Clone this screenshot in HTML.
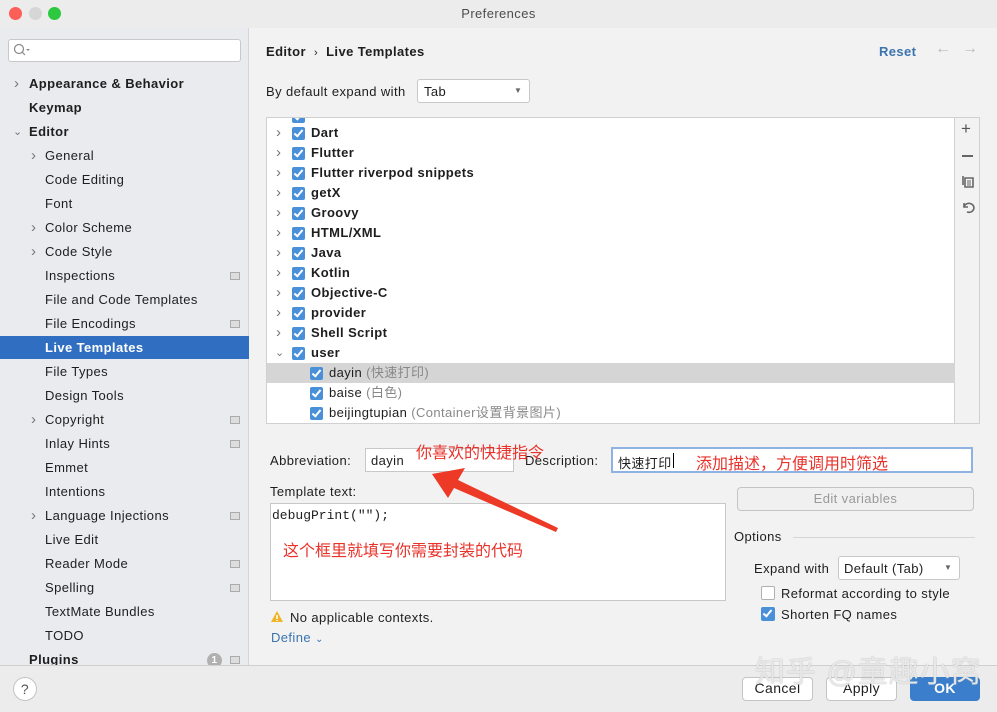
<!DOCTYPE html>
<html><head><meta charset="utf-8"><style>
*{margin:0;padding:0;box-sizing:border-box}
body{width:997px;height:712px;overflow:hidden;background:#f2f2f2;font-family:"Liberation Sans","Noto Sans CJK SC",sans-serif;font-size:13px;color:#1e1e1e;position:relative;letter-spacing:0.4px}
.a{position:absolute;white-space:nowrap}
.side{position:absolute;left:0;top:28px;width:249px;height:637px;background:#e9ebee;border-right:1px solid #d6d6d6}
.si{position:absolute;left:0;width:249px;height:24px;line-height:24px}
.b{font-weight:bold}
.chev{position:absolute;font-size:15px;color:#777;font-weight:normal}
.mi{position:absolute;left:230px;top:8px;width:10px;height:8px;border:1px solid #aaa;background:#ddd}
.cb{position:absolute;width:13px;height:13px;background:#4a90d9;border-radius:2px}
.cb:after{content:"";position:absolute;left:4px;top:1px;width:3px;height:7px;border:solid #fff;border-width:0 2px 2px 0;transform:rotate(40deg)}
.row{position:absolute;left:267px;width:688px;height:20px;line-height:20px}
.fld{position:absolute;background:#fff;border:1px solid #c8c8c8}
.btn{position:absolute;background:#fff;border:1px solid #c4c4c4;border-radius:4px;text-align:center;line-height:21px;font-size:14px}
.red{color:#e8322a;font-size:16px;position:absolute;white-space:nowrap;letter-spacing:0}
</style></head><body>
<div class="a" style="left:0;top:0;width:997px;height:28px;background:#ececec"></div>
<div class="a" style="left:9px;top:7px;width:13px;height:13px;border-radius:50%;background:#fc5f57"></div>
<div class="a" style="left:29px;top:7px;width:13px;height:13px;border-radius:50%;background:#d6d6d6"></div>
<div class="a" style="left:48px;top:7px;width:13px;height:13px;border-radius:50%;background:#2bc840"></div>
<div class="a" style="left:0;width:997px;top:6px;text-align:center;color:#4d4d4d">Preferences</div>

<div class="side">
<div class="a" style="left:8px;top:11px;width:233px;height:23px;background:#fff;border:1px solid #c8c8c8;border-radius:3px"></div>
<svg class="a" style="left:13px;top:15px" width="20" height="14"><circle cx="6" cy="6" r="4.5" fill="none" stroke="#888" stroke-width="1.2"/><line x1="9" y1="9" x2="12" y2="12" stroke="#888" stroke-width="1.2"/><path d="M13 6h4l-2 2z" fill="#888"/></svg>
</div>
<div style="position:absolute;left:0;top:72px;width:249px">
<div class="si b" style="top:0"><span class="chev" style="left:14px">›</span><span class="a" style="left:29px">Appearance &amp; Behavior</span></div>
<div class="si b" style="top:24px"><span class="a" style="left:29px">Keymap</span></div>
<div class="si b" style="top:48px"><span class="chev" style="left:13px;font-size:11px">&#8964;</span><span class="a" style="left:29px">Editor</span></div>
<div class="si" style="top:72px"><span class="chev" style="left:31px">›</span><span class="a" style="left:45px">General</span></div>
<div class="si" style="top:96px"><span class="a" style="left:45px">Code Editing</span></div>
<div class="si" style="top:120px"><span class="a" style="left:45px">Font</span></div>
<div class="si" style="top:144px"><span class="chev" style="left:31px">›</span><span class="a" style="left:45px">Color Scheme</span></div>
<div class="si" style="top:168px"><span class="chev" style="left:31px">›</span><span class="a" style="left:45px">Code Style</span></div>
<div class="si" style="top:192px"><span class="a" style="left:45px">Inspections</span><i class="mi"></i></div>
<div class="si" style="top:216px"><span class="a" style="left:45px">File and Code Templates</span></div>
<div class="si" style="top:240px"><span class="a" style="left:45px">File Encodings</span><i class="mi"></i></div>
<div class="si b" style="top:264px;height:23px;background:#2f6ec0;color:#fff;line-height:23px"><span class="a" style="left:45px">Live Templates</span></div>
<div class="si" style="top:288px"><span class="a" style="left:45px">File Types</span></div>
<div class="si" style="top:312px"><span class="a" style="left:45px">Design Tools</span></div>
<div class="si" style="top:336px"><span class="chev" style="left:31px">›</span><span class="a" style="left:45px">Copyright</span><i class="mi"></i></div>
<div class="si" style="top:360px"><span class="a" style="left:45px">Inlay Hints</span><i class="mi"></i></div>
<div class="si" style="top:384px"><span class="a" style="left:45px">Emmet</span></div>
<div class="si" style="top:408px"><span class="a" style="left:45px">Intentions</span></div>
<div class="si" style="top:432px"><span class="chev" style="left:31px">›</span><span class="a" style="left:45px">Language Injections</span><i class="mi"></i></div>
<div class="si" style="top:456px"><span class="a" style="left:45px">Live Edit</span></div>
<div class="si" style="top:480px"><span class="a" style="left:45px">Reader Mode</span><i class="mi"></i></div>
<div class="si" style="top:504px"><span class="a" style="left:45px">Spelling</span><i class="mi"></i></div>
<div class="si" style="top:528px"><span class="a" style="left:45px">TextMate Bundles</span></div>
<div class="si" style="top:552px"><span class="a" style="left:45px">TODO</span></div>
<div class="si b" style="top:576px;height:17px;overflow:hidden"><span class="a" style="left:29px">Plugins</span><span class="a" style="left:207px;top:5px;width:15px;height:15px;border-radius:50%;background:#b0b0b0;color:#fff;font-size:10px;line-height:15px;text-align:center">1</span><i class="mi"></i></div>
</div>

<div class="a b" style="left:266px;top:44px">Editor &nbsp;<span style="font-weight:normal;font-size:11px">›</span>&nbsp; Live Templates</div>
<div class="a b" style="left:879px;top:44px;color:#3a75b0">Reset</div>
<div class="a" style="left:935px;top:40px;color:#bbb;font-size:16px">←</div>
<div class="a" style="left:962px;top:40px;color:#bbb;font-size:16px">→</div>
<div class="a" style="left:266px;top:84px">By default expand with</div>
<div class="fld" style="left:417px;top:79px;width:113px;height:24px;border-radius:3px"><span class="a" style="left:6px;top:4px">Tab</span><span class="a" style="left:96px;top:6px;font-size:8px;color:#666">▼</span></div>

<div class="fld" style="left:266px;top:117px;width:689px;height:307px;overflow:hidden;border-color:#d0d0d0">
<div class="cb" style="left:25px;top:-8px"></div>
</div>
<div class="a" style="left:955px;top:117px;width:25px;height:307px;border:1px solid #d0d0d0;border-left:none;background:#f2f2f2"></div>
<div class="a" style="left:961px;top:119px;font-size:17px;color:#555">+</div>
<div class="a" style="left:962px;top:155px;width:11px;height:2px;background:#666"></div>
<svg class="a" style="left:961px;top:174px" width="14" height="14"><path d="M2 2v9M4 4h8v9h-8z" fill="none" stroke="#666" stroke-width="1.6"/><path d="M6 7h4M6 9h4M6 11h4" stroke="#666"/></svg>
<svg class="a" style="left:961px;top:200px" width="14" height="14"><path d="M3 3v4h4" fill="none" stroke="#666" stroke-width="1.6"/><path d="M3 7a5 4.5 0 1 1 3 5" fill="none" stroke="#666" stroke-width="1.6"/></svg>

<div style="position:absolute;left:0;top:123px">
<div class="row" style="top:0"><span class="chev" style="left:9px">›</span><i class="cb" style="left:25px;top:4px"></i><span class="a b" style="left:44px">Dart</span></div>
<div class="row" style="top:20px"><span class="chev" style="left:9px">›</span><i class="cb" style="left:25px;top:4px"></i><span class="a b" style="left:44px">Flutter</span></div>
<div class="row" style="top:40px"><span class="chev" style="left:9px">›</span><i class="cb" style="left:25px;top:4px"></i><span class="a b" style="left:44px">Flutter riverpod snippets</span></div>
<div class="row" style="top:60px"><span class="chev" style="left:9px">›</span><i class="cb" style="left:25px;top:4px"></i><span class="a b" style="left:44px">getX</span></div>
<div class="row" style="top:80px"><span class="chev" style="left:9px">›</span><i class="cb" style="left:25px;top:4px"></i><span class="a b" style="left:44px">Groovy</span></div>
<div class="row" style="top:100px"><span class="chev" style="left:9px">›</span><i class="cb" style="left:25px;top:4px"></i><span class="a b" style="left:44px">HTML/XML</span></div>
<div class="row" style="top:120px"><span class="chev" style="left:9px">›</span><i class="cb" style="left:25px;top:4px"></i><span class="a b" style="left:44px">Java</span></div>
<div class="row" style="top:140px"><span class="chev" style="left:9px">›</span><i class="cb" style="left:25px;top:4px"></i><span class="a b" style="left:44px">Kotlin</span></div>
<div class="row" style="top:160px"><span class="chev" style="left:9px">›</span><i class="cb" style="left:25px;top:4px"></i><span class="a b" style="left:44px">Objective-C</span></div>
<div class="row" style="top:180px"><span class="chev" style="left:9px">›</span><i class="cb" style="left:25px;top:4px"></i><span class="a b" style="left:44px">provider</span></div>
<div class="row" style="top:200px"><span class="chev" style="left:9px">›</span><i class="cb" style="left:25px;top:4px"></i><span class="a b" style="left:44px">Shell Script</span></div>
<div class="row" style="top:220px"><span class="chev" style="left:8px;font-size:11px">&#8964;</span><i class="cb" style="left:25px;top:4px"></i><span class="a b" style="left:44px">user</span></div>
<div class="row" style="top:240px;background:#d5d5d5"><i class="cb" style="left:43px;top:4px"></i><span class="a" style="left:62px">dayin <span style="color:#888">(快速打印)</span></span></div>
<div class="row" style="top:260px"><i class="cb" style="left:43px;top:4px"></i><span class="a" style="left:62px">baise <span style="color:#888">(白色)</span></span></div>
<div class="row" style="top:280px"><i class="cb" style="left:43px;top:4px"></i><span class="a" style="left:62px">beijingtupian <span style="color:#888">(Container设置背景图片)</span></span></div>
</div>

<div class="a" style="left:270px;top:453px">Abbreviation:</div>
<div class="fld" style="left:365px;top:448px;width:149px;height:24px"><span class="a" style="left:5px;top:4px">dayin</span></div>
<div class="a" style="left:525px;top:453px">Description:</div>
<div class="fld" style="left:611px;top:447px;width:362px;height:26px;border:2px solid #8db2e3"><span class="a" style="left:5px;top:4px">快速打印</span><span class="a" style="left:60px;top:4px;width:1px;height:15px;background:#000"></span></div>
<div class="a" style="left:270px;top:484px">Template text:</div>
<div class="fld" style="left:270px;top:503px;width:456px;height:98px"><span class="a" style="left:1px;top:4px;font-family:'Liberation Mono',monospace;font-size:13px;letter-spacing:0">debugPrint("");</span></div>
<div class="btn" style="left:737px;top:487px;width:237px;height:24px;background:#f0f0f0;color:#999;font-size:13px">Edit variables</div>
<div class="a" style="left:734px;top:529px">Options</div>
<div class="a" style="left:793px;top:537px;width:182px;height:1px;background:#d5d5d5"></div>
<div class="a" style="left:754px;top:561px">Expand with</div>
<div class="fld" style="left:838px;top:556px;width:122px;height:24px;border-radius:3px"><span class="a" style="left:5px;top:4px">Default (Tab)</span><span class="a" style="left:105px;top:6px;font-size:8px;color:#666">▼</span></div>
<div class="a" style="left:761px;top:586px;width:14px;height:14px;background:#fff;border:1px solid #b0b0b0;border-radius:2px"></div>
<div class="a" style="left:781px;top:586px">Reformat according to style</div>
<i class="cb" style="left:761px;top:607px;width:14px;height:14px"></i>
<div class="a" style="left:781px;top:607px">Shorten FQ names</div>
<svg class="a" style="left:270px;top:610px" width="14" height="13"><path d="M7 1L13 12H1z" fill="#f0b428"/><path d="M7 5v4M7 10v1" stroke="#fff" stroke-width="1.5"/></svg>
<div class="a" style="left:290px;top:610px">No applicable contexts.</div>
<div class="a" style="left:271px;top:630px;color:#3a75b0">Define <span style="font-size:10px">⌄</span></div>

<div class="a" style="left:0;top:665px;width:997px;height:47px;background:#ececec;border-top:1px solid #cfcfcf"></div>
<div class="a" style="left:13px;top:677px;width:24px;height:24px;border-radius:50%;background:#fff;border:1px solid #c4c4c4;text-align:center;line-height:22px;color:#555;font-size:14px">?</div>
<div class="btn" style="left:742px;top:677px;width:71px;height:24px">Cancel</div>
<div class="btn" style="left:826px;top:677px;width:71px;height:24px">Apply</div>
<div class="btn b" style="left:910px;top:677px;width:70px;height:24px;background:#3b7fcc;border-color:#3b7fcc;color:#fff">OK</div>
<div class="a" style="left:755px;top:647px;font-size:30px;color:rgba(255,255,255,0.75);letter-spacing:1px;text-shadow:0 0 1px #999">知乎 @童趣小窝</div>

<div class="red" style="left:416px;top:439px">你喜欢的快捷指令</div>
<div class="red" style="left:696px;top:450px">添加描述，方便调用时筛选</div>
<div class="red" style="left:283px;top:537px">这个框里就填写你需要封装的代码</div>
<svg class="a" style="left:420px;top:460px" width="150" height="80"><path d="M12 14L45 8L38 20L138 68L136 72L34 28L28 38Z" fill="#ec3a26"/></svg>
</body></html>
